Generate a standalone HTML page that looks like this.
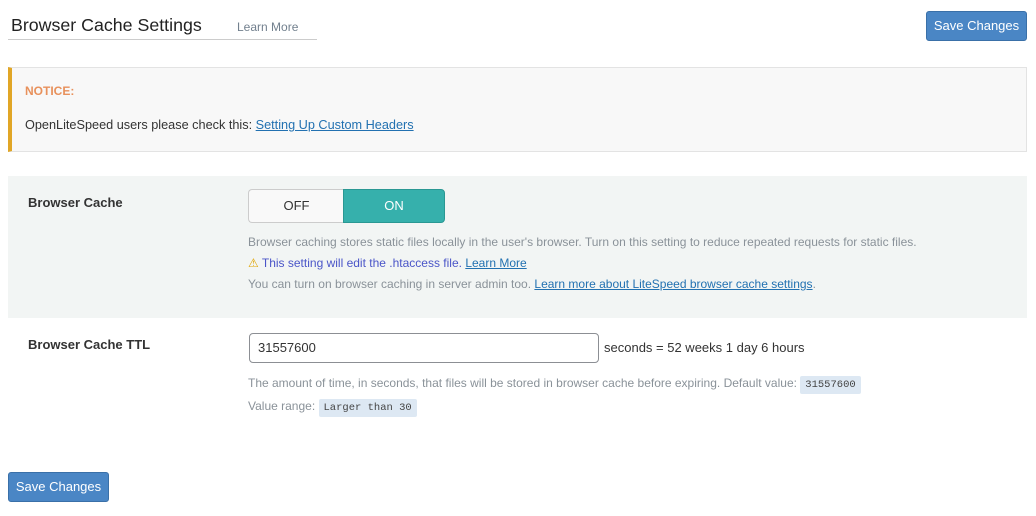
<!DOCTYPE html>
<html><head><meta charset="utf-8"><style>
*{margin:0;padding:0;box-sizing:border-box}
body{width:1036px;height:516px;background:#fff;font-family:"Liberation Sans",sans-serif;color:#333;position:relative;overflow:hidden}
.a{position:absolute;white-space:nowrap}
.btn{position:absolute;background:#4a86c5;border:1px solid #3a70a8;border-radius:3px;color:#fff;font-size:13px;text-align:center;line-height:28px;width:101px;height:30px}
a{color:#2271b1;text-decoration:underline}
.d{font-size:12px;color:#8a9299}
code{font-family:"Liberation Mono",monospace;font-size:10.5px;background:#dde8f3;color:#444;padding:3px 5px;border-radius:2px}
</style></head><body>
<div class="a" style="left:11px;top:15px;font-size:17.8px;color:#222">Browser Cache Settings</div>
<div class="a" style="left:237px;top:20px;font-size:12px;color:#72808e">Learn More</div>
<div class="a" style="left:8px;top:39px;width:309px;height:1px;background:#ccc"></div>
<div class="btn" style="left:926px;top:11px">Save Changes</div>

<div class="a" style="left:8px;top:67px;width:1019px;height:85px;background:#f8f8f8;border:1px solid #e3e3e3;border-left:4px solid #e1a626"></div>
<div class="a" style="left:25px;top:84px;font-size:12px;color:#e8915c;font-weight:bold">NOTICE:</div>
<div class="a" style="left:25px;top:118px;font-size:12.7px;color:#333">OpenLiteSpeed users please check this: <a>Setting Up Custom Headers</a></div>

<div class="a" style="left:8px;top:176px;width:1019px;height:142px;background:#f2f5f4"></div>
<div class="a" style="left:28px;top:195px;font-size:13px;font-weight:bold;color:#333">Browser Cache</div>
<div class="a" style="left:248px;top:189px;width:96px;height:34px;background:#f9f9f9;border:1px solid #ccc;border-right:none;border-radius:4px 0 0 4px;font-size:13px;text-align:center;line-height:32px;color:#333">OFF</div>
<div class="a" style="left:343px;top:189px;width:102px;height:34px;background:#36b0ac;border:1px solid #2a9893;border-radius:0 4px 4px 0;font-size:13px;text-align:center;line-height:32px;color:#fff">ON</div>
<div class="a d" style="left:248px;top:235px">Browser caching stores static files locally in the user's browser. Turn on this setting to reduce repeated requests for static files.</div>
<div class="a d" style="left:248px;top:256px;color:#4a55c8"><span style="color:#e0a400">⚠</span> This setting will edit the .htaccess file. <a>Learn More</a></div>
<div class="a d" style="left:248px;top:277px">You can turn on browser caching in server admin too. <a>Learn more about LiteSpeed browser cache settings</a>.</div>

<div class="a" style="left:28px;top:337px;font-size:13px;font-weight:bold;color:#333">Browser Cache TTL</div>
<div class="a" style="left:249px;top:333px;width:350px;height:30px;border:1px solid #8c8f94;border-radius:4px;font-size:13px;line-height:28px;padding-left:8px;color:#333">31557600</div>
<div class="a" style="left:604px;top:340px;font-size:13px;color:#333">seconds = 52 weeks 1 day 6 hours</div>
<div class="a d" style="left:248px;top:376px">The amount of time, in seconds, that files will be stored in browser cache before expiring. Default value: <code>31557600</code></div>
<div class="a d" style="left:248px;top:399px">Value range: <code>Larger than 30</code></div>

<div class="btn" style="left:8px;top:472px">Save Changes</div>
</body></html>
